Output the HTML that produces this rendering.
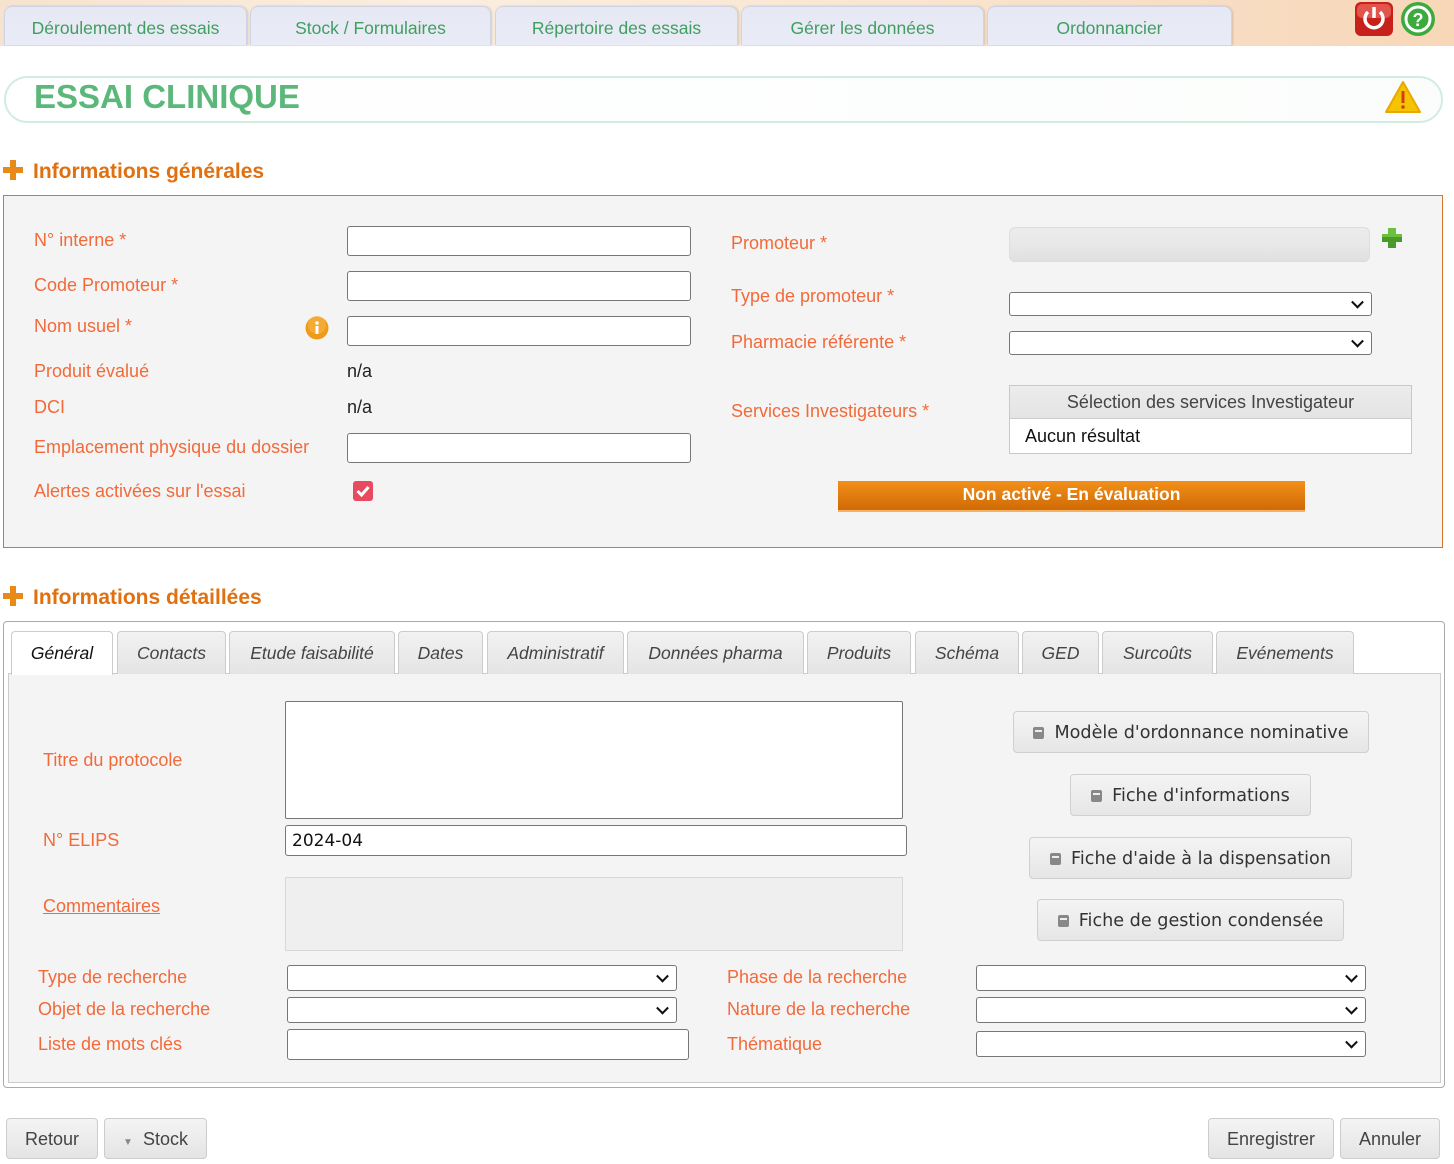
<!DOCTYPE html>
<html><head><meta charset="utf-8">
<style>
*{box-sizing:border-box;margin:0;padding:0}
body{width:1454px;height:1164px;background:#fff;font-family:"Liberation Sans",Arial,sans-serif;position:relative;overflow:hidden}
.a{position:absolute}
.top{left:0;top:0;width:1454px;height:46px;background:linear-gradient(90deg,#f6e3cf,#fbeee0 30%,#f9e6d2 60%,#f7d7b8);}
.nt{top:6px;height:39px;border-radius:8px 8px 0 0;background:linear-gradient(#e6e8f4,#e9ebf6);border:1px solid #d0d3e3;border-bottom:none;color:#3f9f5f;font-size:17.5px;text-align:center;line-height:42px;box-shadow:1px 0 2px rgba(0,0,0,.15)}
.lbl{color:#f26a3a;font-size:18px;white-space:nowrap}
.inp{background:#fff;border:1px solid #777;border-radius:3px}
.sel{background:#fff;border:1px solid #777;border-radius:3px}
.sel:after{content:"";position:absolute;right:9px;top:50%;width:7px;height:7px;border-right:2px solid #111;border-bottom:2px solid #111;transform:translateY(-70%) rotate(45deg)}
.tab{top:631px;height:43px;background:linear-gradient(#f2f2f2,#e4e4e4);border:1px solid #ccc;border-bottom:none;border-radius:4px 4px 0 0;font-style:italic;color:#444;font-size:17.5px;text-align:center;line-height:42px}
.btn{background:linear-gradient(#f4f4f4,#e6e6e6);border:1px solid #d0d0d0;border-radius:4px;font-family:"DejaVu Sans",sans-serif;font-size:17.6px;color:#333;text-align:center;line-height:42px;white-space:nowrap}
.ico{display:inline-block;width:11px;height:12px;background:#888;border-radius:2px;margin-right:10px;vertical-align:-1px;position:relative}
.ico:after{content:"";position:absolute;left:2px;top:3px;width:7px;height:2px;background:#eee}
.fb{top:1118px;height:41px;background:linear-gradient(#f4f4f4,#e4e4e4);border:1px solid #ccc;border-radius:4px;font-size:18px;color:#444;text-align:center;line-height:40px}
.sec{color:#e07010;font-weight:bold;font-size:21px}
.plus{width:20px;height:20px}
.plus:before{content:"";position:absolute;left:7px;top:0;width:6px;height:20px;background:#e88a1a}
.plus:after{content:"";position:absolute;left:0;top:7px;width:20px;height:6px;background:#e88a1a}
</style></head><body>
<div class="a top"></div>
<div class="a nt" style="left:4px;width:243px">Déroulement des essais</div>
<div class="a nt" style="left:250px;width:241px">Stock / Formulaires</div>
<div class="a nt" style="left:495px;width:243px">Répertoire des essais</div>
<div class="a nt" style="left:741px;width:243px">Gérer les données</div>
<div class="a nt" style="left:987px;width:245px">Ordonnancier</div>
<svg class="a" style="left:1354px;top:1px" width="40" height="36"><rect x="1" y="1" width="38" height="34" rx="6" fill="#c8201a"/><rect x="3" y="3" width="34" height="14" rx="5" fill="#e2554c"/><path d="M14 11a9 9 0 1 0 12 0" stroke="#fff" stroke-width="3.5" fill="none"/><line x1="20" y1="6" x2="20" y2="17" stroke="#fff" stroke-width="3.5"/></svg>
<svg class="a" style="left:1399px;top:1px" width="38" height="36"><circle cx="19" cy="18" r="17" fill="#3caa3c"/><circle cx="19" cy="18" r="12" fill="none" stroke="#fff" stroke-width="3"/><text x="19" y="25" font-size="18" font-weight="bold" fill="#fff" text-anchor="middle" font-family="Liberation Sans">?</text></svg>

<div class="a" style="left:4px;top:76px;width:1439px;height:47px;border:2px solid #d3ece1;border-radius:24px;background:linear-gradient(90deg,#fff,#fbfdfc)"></div>
<div class="a" style="left:34px;top:78px;font-size:33px;font-weight:bold;color:#5bb87a">ESSAI CLINIQUE</div>
<svg class="a" style="left:1384px;top:80px" width="38" height="34"><path d="M19 2L36 32H2Z" fill="#f5c400" stroke="#e8a800" stroke-width="2" stroke-linejoin="round"/><rect x="17.5" y="11" width="3" height="12" fill="#d04010"/><circle cx="19" cy="27" r="1.8" fill="#d04010"/></svg>

<div class="a plus" style="left:3px;top:160px"></div>
<div class="a sec" style="left:33px;top:160px">Informations générales</div>
<div class="a" style="left:3px;top:195px;width:1440px;height:353px;border:1px solid #d8742c;background:#f4f4f4"></div>
<div class="a lbl" style="left:34px;top:230px">N° interne *</div>
<div class="a lbl" style="left:34px;top:275px">Code Promoteur *</div>
<div class="a lbl" style="left:34px;top:316px">Nom usuel *</div>
<div class="a lbl" style="left:34px;top:361px">Produit évalué</div>
<div class="a lbl" style="left:34px;top:397px">DCI</div>
<div class="a lbl" style="left:34px;top:437px">Emplacement physique du dossier</div>
<div class="a lbl" style="left:34px;top:481px">Alertes activées sur l'essai</div>
<div class="a inp" style="left:347px;top:226px;width:344px;height:30px"></div>
<div class="a inp" style="left:347px;top:271px;width:344px;height:30px"></div>
<div class="a inp" style="left:347px;top:316px;width:344px;height:30px"></div>
<div class="a inp" style="left:347px;top:433px;width:344px;height:30px"></div>
<svg class="a" style="left:305px;top:316px" width="26" height="26"><circle cx="12" cy="12" r="11.5" fill="#f09a1a"/><circle cx="12" cy="9" r="9" fill="#f7b84a" opacity=".6"/><circle cx="12" cy="7" r="1.8" fill="#fff"/><rect x="10.5" y="10" width="3" height="8" fill="#fff"/></svg>
<div class="a" style="left:347px;top:361px;font-size:18px;color:#222">n/a</div>
<div class="a" style="left:347px;top:397px;font-size:18px;color:#222">n/a</div>
<svg class="a" style="left:353px;top:481px" width="20" height="20"><rect width="20" height="20" rx="3" fill="#e84a5f"/><path d="M4.5 10l4 4 7-8" stroke="#fff" stroke-width="3" fill="none"/></svg>

<div class="a lbl" style="left:731px;top:233px">Promoteur *</div>
<div class="a lbl" style="left:731px;top:286px">Type de promoteur *</div>
<div class="a lbl" style="left:731px;top:332px">Pharmacie référente *</div>
<div class="a lbl" style="left:731px;top:401px">Services Investigateurs *</div>
<div class="a" style="left:1009px;top:227px;width:361px;height:35px;border:1px solid #ddd;border-radius:6px;background:linear-gradient(#ececec,#e8e8e8 50%,#e0e0e0)"></div>
<svg class="a" style="left:1381px;top:227px" width="22" height="22"><path d="M7 1h8v6h6v8h-6v6H7v-6H1V7h6z" fill="#4a9a2a"/><path d="M7 1h8v6h6v3H1V7h6z" fill="#6cc040"/></svg>
<div class="a sel" style="left:1009px;top:292px;width:363px;height:24px"></div>
<div class="a sel" style="left:1009px;top:331px;width:363px;height:24px"></div>
<div class="a" style="left:1009px;top:385px;width:403px;height:69px;border:1px solid #c8c8c8;background:#fff"></div>
<div class="a" style="left:1010px;top:386px;width:401px;height:33px;background:linear-gradient(#ececec,#e4e4e4);border-bottom:1px solid #ccc;text-align:center;line-height:32px;font-size:18px;color:#444">Sélection des services Investigateur</div>
<div class="a" style="left:1025px;top:426px;font-size:18px;color:#111">Aucun résultat</div>
<div class="a" style="left:838px;top:481px;width:467px;height:31px;background:linear-gradient(#f39019,#d06a05);border-bottom:2px solid #f5b060;color:#fff;font-weight:bold;font-size:17.5px;text-align:center;line-height:27px">Non activé - En évaluation</div>

<div class="a plus" style="left:3px;top:586px"></div>
<div class="a sec" style="left:33px;top:586px">Informations détaillées</div>
<div class="a" style="left:3px;top:621px;width:1442px;height:467px;border:1px solid #aaa;border-radius:4px;background:#fff"></div>
<div class="a" style="left:8px;top:673px;width:1433px;height:410px;border:1px solid #ccc;background:#f4f4f4"></div>
<div class="a tab" style="left:117px;width:109px">Contacts</div>
<div class="a tab" style="left:229px;width:166px">Etude faisabilité</div>
<div class="a tab" style="left:398px;width:85px">Dates</div>
<div class="a tab" style="left:487px;width:137px">Administratif</div>
<div class="a tab" style="left:627px;width:177px">Données pharma</div>
<div class="a tab" style="left:807px;width:104px">Produits</div>
<div class="a tab" style="left:915px;width:104px">Schéma</div>
<div class="a tab" style="left:1022px;width:77px">GED</div>
<div class="a tab" style="left:1102px;width:111px">Surcoûts</div>
<div class="a tab" style="left:1216px;width:138px">Evénements</div>
<div class="a tab" style="left:11px;width:102px;height:44px;background:#fff;color:#111">Général</div>

<div class="a lbl" style="left:43px;top:750px">Titre du protocole</div>
<div class="a lbl" style="left:43px;top:830px">N° ELIPS</div>
<div class="a lbl" style="left:43px;top:896px;text-decoration:underline">Commentaires</div>
<div class="a" style="left:285px;top:701px;width:618px;height:118px;border:1px solid #777;border-radius:2px;background:#fff"></div>
<div class="a inp" style="left:285px;top:825px;width:622px;height:31px;font-family:'DejaVu Sans',sans-serif;font-size:17px;line-height:30px;padding-left:6px;color:#111">2024-04</div>
<div class="a" style="left:285px;top:877px;width:618px;height:74px;border:1px solid #d8d8d8;background:#efefef"></div>

<div class="a btn" style="left:1013px;top:711px;width:356px;height:42px"><span class="ico"></span>Modèle d'ordonnance nominative</div>
<div class="a btn" style="left:1070px;top:774px;width:241px;height:42px"><span class="ico"></span>Fiche d'informations</div>
<div class="a btn" style="left:1029px;top:837px;width:323px;height:42px"><span class="ico"></span>Fiche d'aide à la dispensation</div>
<div class="a btn" style="left:1037px;top:899px;width:307px;height:42px"><span class="ico"></span>Fiche de gestion condensée</div>

<div class="a lbl" style="left:38px;top:967px">Type de recherche</div>
<div class="a lbl" style="left:38px;top:999px">Objet de la recherche</div>
<div class="a lbl" style="left:38px;top:1034px">Liste de mots clés</div>
<div class="a sel" style="left:287px;top:965px;width:390px;height:26px"></div>
<div class="a sel" style="left:287px;top:997px;width:390px;height:26px"></div>
<div class="a inp" style="left:287px;top:1029px;width:402px;height:31px"></div>
<div class="a lbl" style="left:727px;top:967px">Phase de la recherche</div>
<div class="a lbl" style="left:727px;top:999px">Nature de la recherche</div>
<div class="a lbl" style="left:727px;top:1034px">Thématique</div>
<div class="a sel" style="left:976px;top:965px;width:390px;height:26px"></div>
<div class="a sel" style="left:976px;top:997px;width:390px;height:26px"></div>
<div class="a sel" style="left:976px;top:1031px;width:390px;height:26px"></div>

<div class="a fb" style="left:6px;width:92px">Retour</div>
<div class="a fb" style="left:104px;width:103px"><span style="font-size:10px;color:#888;margin-right:10px">▼</span>Stock</div>
<div class="a fb" style="left:1208px;width:126px">Enregistrer</div>
<div class="a fb" style="left:1340px;width:100px">Annuler</div>
</body></html>
